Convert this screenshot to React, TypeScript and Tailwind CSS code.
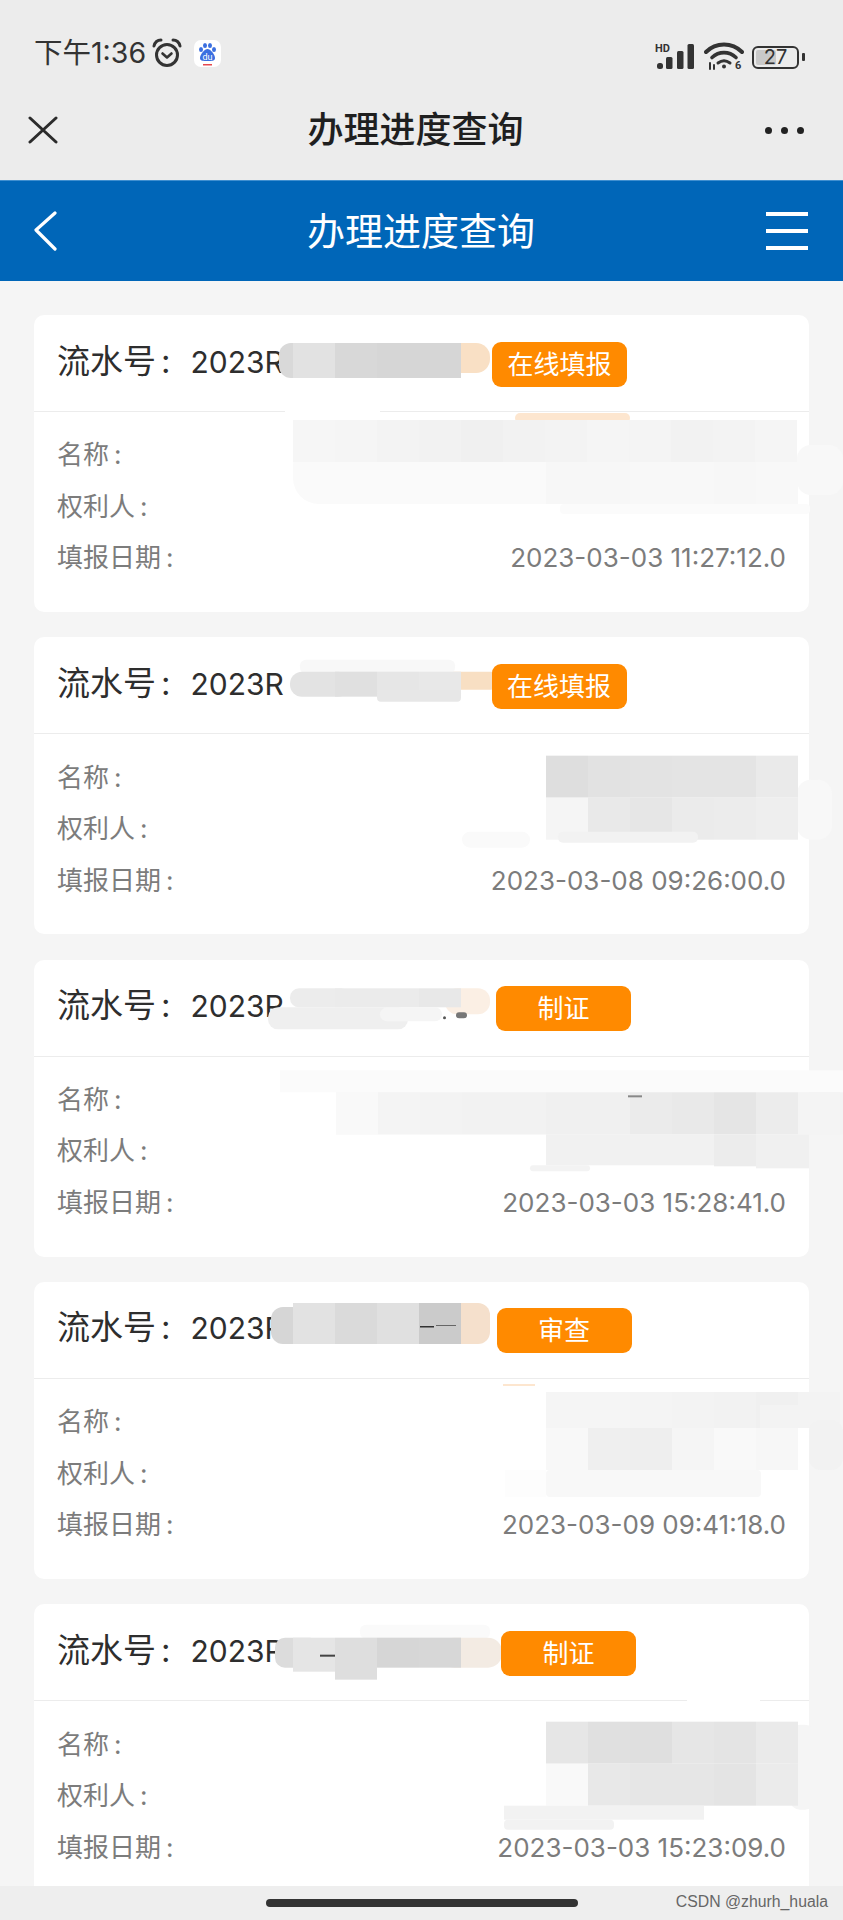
import React from 'react';

const FONT = "font-['Inter','Noto_Sans_CJK_SC',sans-serif]";

type Cell = [number, number, number, number, string, number?];

// redaction marks from the screenshot, in page coordinates: x, y, w, h, colour, radius
const row = (x: number, y: number, h: number, colors: string[]): Cell[] =>
  colors.map((c, i) => [x + i * 42, y, 42, h, c] as Cell);

const cards = [
  {
    top: 315,
    title: 'w-[435px]',
    tag: '在线填报',
    date: '2023-03-03 11:27:12.0',
    marks: [
      [440, 343, 50, 30, '#f9e0c5', 14],
      [279, 343, 60, 35, '#d9d9d9', 12],
      ...row(293, 343, 35, ['#e2e2e2', '#d8d8d8', '#d6d6d6', '#d6d6d6']),
      [285, 411, 95, 3, '#ffffff'],
      [515, 413, 115, 10, '#fde6cf', 5],
      [293, 440, 300, 64, '#fafafa', 26],
      [797, 445, 46, 50, '#f8f8f8', 14],
      ...row(293, 420, 42, ['#f6f6f6', '#f5f5f5', '#f3f3f3', '#f2f2f2', '#f0f0f0', '#f2f2f2', '#f3f3f3', '#f5f5f5', '#f4f4f4', '#f2f2f2', '#f3f3f3', '#f5f5f5']),
      ...row(546, 462, 42, ['#f7f7f7', '#f7f7f7', '#f8f8f8', '#f8f8f8', '#f7f7f7', '#f8f8f8']),
      [560, 504, 250, 10, '#fbfbfb', 4],
    ] as Cell[],
  },
  {
    top: 637.33,
    title: 'w-[434.5px]',
    tag: '在线填报',
    date: '2023-03-08 09:26:00.0',
    marks: [
      [300, 660, 155, 14, '#f8f8f8', 6],
      [445, 672, 55, 18, '#f8dfc3', 9],
      [290, 672, 60, 25, '#e3e3e3', 12],
      ...row(335, 672, 25, ['#e0e0e0', '#e6e6e6', '#e8e8e8']),
      [377, 690, 84, 12, '#e7e7e7', 4],
      [797, 780, 35, 60, '#f8f8f8', 14],
      ...row(546, 756, 42, ['#dedede', '#e2e2e2', '#e3e3e3', '#e4e4e4', '#e4e4e4', '#eaeaea']),
      ...row(546, 798, 42, ['#f5f5f5', '#e9e9e9', '#e6e6e6', '#ebebeb', '#ececec', '#eeeeee']),
      [558, 832, 140, 11, '#f2f2f2', 5],
      [462, 832, 68, 16, '#fafafa', 8],
    ] as Cell[],
  },
  {
    top: 959.67,
    title: 'w-[439px]',
    tag: '制证',
    date: '2023-03-03 15:28:41.0',
    marks: [
      [445, 988, 45, 26, '#fbefe4', 12],
      [290, 988, 60, 19, '#ececec', 9],
      ...row(335, 988, 19, ['#ebebeb', '#ebebeb', '#e8e8e8']),
      [268, 1007, 140, 22, '#efefef', 10],
      [380, 1007, 62, 14, '#f5f5f5', 7],
      [443, 1016, 3, 3, '#555555', 1.5],
      [456, 1012, 11, 6, '#777777', 3],
      [280, 1070, 563, 22, '#fbfbfb'],
      [336, 1092, 507, 42, '#f3f3f3'],
      ...row(336, 1092, 42, ['#f9f9f9', '#f4f4f4', '#f3f3f3', '#f2f2f2', '#f2f2f2', '#f0f0f0', '#f0f0f0', '#ebebeb', '#e9e9e9', '#e5e5e5', '#ececec', '#f4f4f4']),
      [546, 1134, 168, 31, '#f1f1f1'],
      [714, 1134, 42, 32, '#ececec'],
      [756, 1134, 53, 34, '#f0f0f0'],
      [628, 1095, 14, 2, '#888888'],
      [530, 1165, 60, 6, '#f3f3f3', 3],
    ] as Cell[],
  },
  {
    top: 1282,
    title: 'w-[439.5px]',
    tag: '审查',
    date: '2023-03-09 09:41:18.0',
    marks: [
      [445, 1303, 45, 41, '#f5e0cc', 12],
      [271, 1307, 50, 37, '#d6d6d6', 12],
      ...row(293, 1303, 41, ['#e2e2e2', '#dadada', '#e0e0e0', '#cbcbcb']),
      [420, 1326, 14, 1.5, '#333333'],
      [436, 1325, 20, 1, '#666666'],
      [503, 1384, 32, 2, '#fde6cf'],
      ...row(546, 1392, 36, ['#f5f5f5', '#f5f5f5', '#f4f4f4', '#f3f3f3', '#f2f2f2', '#f0f0f0', '#f3f3f3']),
      [760, 1405, 49, 23, '#f3f3f3'],
      [809, 1420, 34, 50, '#f2f2f2', 12],
      ...row(546, 1428, 42, ['#f8f8f8', '#efefef', '#eeeeee', '#f5f5f5', '#f9f9f9', '#f7f7f7']),
      [505, 1470, 41, 27, '#fdfdfd'],
      [546, 1470, 215, 27, '#f8f8f8', 4],
    ] as Cell[],
  },
  {
    top: 1604.33,
    title: 'w-[444px]',
    tag: '制证',
    date: '2023-03-03 15:23:09.0',
    marks: [
      [360, 1625, 130, 14, '#fafafa', 6],
      [440, 1638, 62, 30, '#f3ebe3', 14],
      [275, 1638, 45, 30, '#dcdcdc', 10],
      [293, 1638, 42, 34, '#e5e5e5'],
      [335, 1638, 42, 42, '#dedede'],
      ...row(377, 1638, 30, ['#d6d6d6', '#d7d7d7']),
      [320, 1655, 15, 2, '#444444'],
      [687, 1699, 73, 3, '#ffffff'],
      [790, 1725, 25, 85, '#f5f5f5', 10],
      ...row(546, 1722, 42, ['#e6e6e6', '#e0e0e0', '#dfdfdf', '#e6e6e6', '#e4e4e4', '#eaeaea']),
      ...row(546, 1764, 42, ['#f9f9f9', '#e8e8e8', '#e6e6e6', '#e6e6e6', '#e4e4e4', '#ebebeb']),
      [504, 1806, 200, 14, '#f2f2f2'],
      [504, 1820, 110, 10, '#f2f2f2', 4],
    ] as Cell[],
  },
];

const Marks = ({ top, marks }: { top: number; marks: Cell[] }) => (
  <svg
    className="absolute top-0 left-[-34px] overflow-visible"
    width="843"
    height="297"
    viewBox={`0 ${top} 843 297`}
  >
    {marks.map(([x, y, w, h, fill, r], i) => (
      <rect key={i} x={x} y={y} width={w} height={h} fill={fill} rx={r ?? 0} />
    ))}
  </svg>
);

const StatusIcons = () => (
  <div className="mt-[7px] flex items-center">
    <svg width="40" height="28" viewBox="0 0 40 28" className="mr-[9px]">
      <text x="0" y="9" fontSize="11" fontWeight="700" fill="#333" fontFamily="Roboto">HD</text>
      <g fill="#333">
        <rect x="2" y="20" width="6" height="6" rx="2.5" />
        <rect x="11" y="14" width="6.5" height="12" rx="1.5" />
        <rect x="22" y="8" width="6.5" height="18" rx="1.5" />
        <rect x="32.5" y="1" width="6.5" height="25" rx="1.5" />
      </g>
    </svg>
    <svg width="40" height="30" viewBox="0 0 40 30" className="mr-[8px]" fill="none" stroke="#333" strokeLinecap="round">
      <path d="M2 10 C12 0 28 0 38 10" strokeWidth="4" />
      <path d="M8 15.5 C15 9 25 9 32 15.5" strokeWidth="3.6" />
      <path d="M14 21 C18 18 22 18 26 21" strokeWidth="3" />
      <circle cx="20" cy="24.5" r="2" fill="#333" stroke="none" />
      <path d="M6 21v6M10 23v4" strokeWidth="2" />
      <text x="31" y="27" fontSize="11" fontWeight="700" fill="#333" stroke="none" fontFamily="Roboto">6</text>
    </svg>
    <div className="relative flex h-[23px] w-[47px] items-center justify-center rounded-[6px] border-[2.5px] border-[#333] text-[20px] text-[#333]">
      <div className="absolute top-[2px] bottom-[2px] left-[2px] w-[20px] rounded-[2px] bg-[#c9c9c9]"></div>
      <span className="relative leading-none">27</span>
    </div>
    <div className="ml-[3px] h-[8px] w-[3px] rounded-[1px] bg-[#333]"></div>
  </div>
);

export default function App() {
  return (
    <div className={`relative h-[1920px] w-[843px] overflow-hidden bg-[#f5f5f5] ${FONT}`}>
      {/* Status bar */}
      <div className="flex h-[80px] items-start justify-between bg-[#ececec] pt-[35px] pr-[38px] pl-[34px]">
        <div className="flex items-center">
          <span className="text-[28.5px] leading-[36px] text-[#333]">下午1:36</span>
          <svg width="32" height="32" viewBox="0 0 32 32" className="ml-[5px]" fill="none" stroke="#333">
            <circle cx="16" cy="18" r="10.5" strokeWidth="3" />
            <path d="M11.5 16.5 L16 20.5 L20.5 16.5" strokeWidth="2.6" strokeLinecap="round" strokeLinejoin="round" />
            <path d="M3 9 C4 5 7 3 10 3" strokeWidth="3" strokeLinecap="round" />
            <path d="M29 9 C28 5 25 3 22 3" strokeWidth="3" strokeLinecap="round" />
          </svg>
          <svg width="27" height="27" viewBox="0 0 27 27" className="ml-[11px]">
            <rect width="27" height="27" rx="7" fill="#ffffff" />
            <g fill="#3b6fe0">
              <ellipse cx="7" cy="9.5" rx="2" ry="2.5" />
              <ellipse cx="11" cy="5.5" rx="2" ry="2.5" />
              <ellipse cx="16" cy="5.5" rx="2" ry="2.5" />
              <ellipse cx="20" cy="9.5" rx="2" ry="2.5" />
              <path d="M13.5 9 C16 9 21 14 21 18 C21 21 18 21 13.5 21 C9 21 6 21 6 18 C6 14 11 9 13.5 9 Z" />
            </g>
            <text x="13.5" y="19.5" textAnchor="middle" fontSize="9" fill="#ffffff" fontFamily="Roboto">du</text>
            <rect x="9" y="24" width="9" height="1.5" fill="#e5484d" />
          </svg>
        </div>
        <StatusIcons />
      </div>

      {/* WeChat title bar */}
      <div className="flex h-[100px] items-center justify-between bg-[#ececec] pr-[39px] pl-[28px]">
        <svg width="30" height="28" viewBox="0 0 30 28" fill="none" stroke="#2b2b2b" strokeWidth="3" strokeLinecap="round">
          <path d="M2 2 L28 26 M28 2 L2 26" />
        </svg>
        <h1 className="ml-[8px] text-[36px] leading-none font-medium text-[#1f1f1f]">办理进度查询</h1>
        <div className="flex gap-[9px]">
          <div className="size-[7px] rounded-full bg-[#222]"></div>
          <div className="size-[7px] rounded-full bg-[#222]"></div>
          <div className="size-[7px] rounded-full bg-[#222]"></div>
        </div>
      </div>

      {/* Blue header */}
      <div className="flex h-[101px] items-center justify-between border-t border-[#3f8fd0] bg-[#0066b8] pr-[35px] pl-[33px]">
        <svg width="24" height="40" viewBox="0 0 24 40" fill="none" stroke="#ffffff" strokeWidth="3.2" strokeLinecap="round" strokeLinejoin="round">
          <path d="M22 2 L3 19 L22 38" />
        </svg>
        <h2 className="ml-[19px] text-[38px] leading-none text-white">办理进度查询</h2>
        <div className="flex w-[42px] flex-col gap-[13px]">
          <div className="h-[4px] bg-white"></div>
          <div className="h-[4px] bg-white"></div>
          <div className="h-[4px] bg-white"></div>
        </div>
      </div>

      {/* Records */}
      <div className="flex flex-col gap-[25.33px] px-[34px] pt-[34px]">
        {cards.map((card) => (
          <div key={card.top} className="relative h-[297px] w-[775px] shrink-0 rounded-[10px] bg-white">
            <div className="flex h-[97px] items-center border-b border-[#ececec] pl-[23px]">
              <div className={`${card.title} flex items-baseline pb-[4px] text-[33px] leading-none whitespace-nowrap text-[#2e2e2e]`}>
                流水号<span className="mr-[20px] ml-[5px]">:</span>
                <span className="text-[30px]">2023R</span>
              </div>
              <div className="relative z-10 mt-[2px] flex h-[45px] w-[135px] items-center justify-center rounded-[9px] bg-[#ff8a00] text-[26px] text-white">
                {card.tag}
              </div>
            </div>
            <div className="flex flex-col pt-[17px] pr-[23px] pl-[23px] text-[26px] text-[#7c7c7c]">
              <div className="flex h-[51.5px] items-center">名称<span className="ml-[5px]">:</span></div>
              <div className="flex h-[51.5px] items-center">权利人<span className="ml-[5px]">:</span></div>
              <div className="flex h-[51.5px] items-center justify-between">
                <span>填报日期<span className="ml-[5px]">:</span></span>
                <span>{card.date}</span>
              </div>
            </div>
            <Marks top={card.top} marks={card.marks} />
          </div>
        ))}
      </div>

      {/* Home bar, lies over the last card */}
      <div className="absolute right-0 bottom-0 left-0 flex h-[34px] items-center justify-center bg-[#eeeeee]">
        <div className="h-[8px] w-[312px] rounded-full bg-[#333]"></div>
        <span className="absolute top-[7px] right-[15px] font-['Liberation_Sans',sans-serif] text-[15.8px] leading-[18px] text-[#666]">
          CSDN @zhurh_huala
        </span>
      </div>
    </div>
  );
}
